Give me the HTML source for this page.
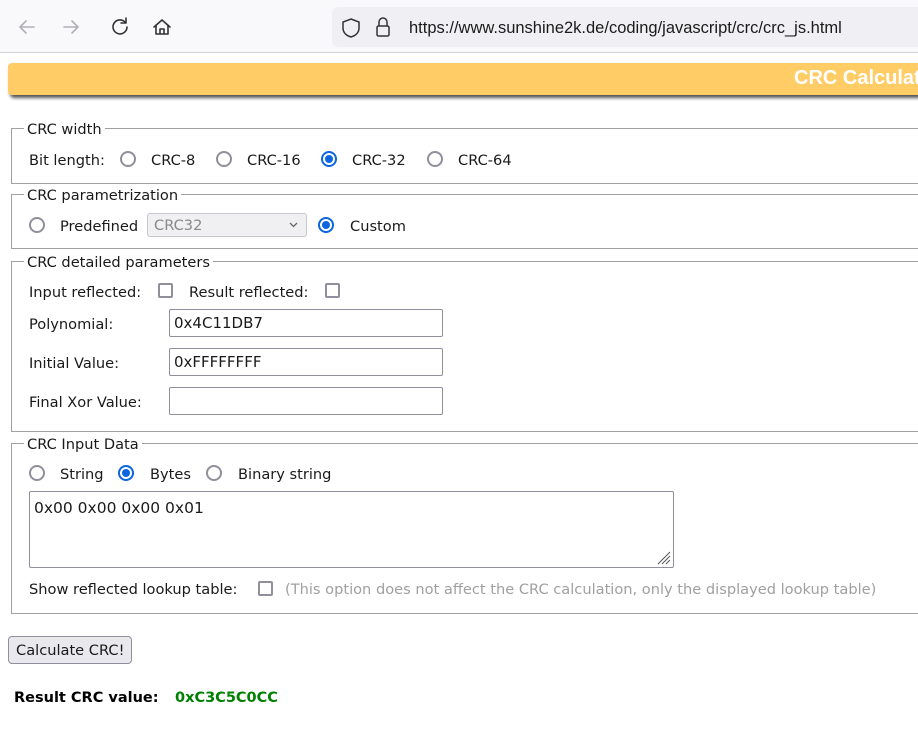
<!DOCTYPE html>
<html><head><style>
body{margin:0;width:918px;height:730px;overflow:hidden;background:#fff;font-family:"DejaVu Sans","Liberation Sans",sans-serif;font-size:14.6px;color:#1a1a1a;position:relative}
.a{position:absolute;white-space:nowrap}
.fs{position:absolute;left:11px;width:920px;border:1px solid #a0a0a0;border-right:none}
.lg{position:absolute;background:#fff;padding:0 3px;left:24px;line-height:16px}
.r{position:absolute;width:16px;height:16px;border:2px solid #8f8f9d;border-radius:50%;box-sizing:border-box}
.r.on{border:2px solid #0b66e0}
.r.on::after{content:"";position:absolute;left:2px;top:2px;width:8px;height:8px;border-radius:50%;background:#0b66e0}
.cb{position:absolute;width:15px;height:15px;border:2px solid #8f8f9d;border-radius:2px;box-sizing:border-box}
.in{position:absolute;height:28px;border:1px solid #8f8f9d;border-radius:2px;box-sizing:border-box;padding:3px 4px;line-height:20px;font-size:15px}
</style></head><body>
<div class="a" style="left:0;top:0;width:918px;height:52px;background:#f9f9fb;border-bottom:1px solid #d0d0d6"></div>
<svg class="a" style="left:0;top:0" width="200" height="52" fill="none" stroke-width="1.6" stroke-linecap="round" stroke-linejoin="round">
<path d="M34 27H20M26 21l-6 6 6 6" stroke="#b0b0b6"/>
<path d="M64 27h14M72 21l6 6-6 6" stroke="#b0b0b6"/>
<path d="M125 22a7 7 0 1 0 2 5M126 18v5h-5" stroke="#333"/>
<path d="M154 27l8-7 8 7M156 25v9h12v-9M160 34v-5h4v5" stroke="#333"/>
</svg>
<div class="a" style="left:332px;top:7px;width:600px;height:40px;background:#f0f0f4;border-radius:6px"></div>
<svg class="a" style="left:340px;top:14px" width="60" height="28" fill="none" stroke="#333" stroke-width="1.5">
<path d="M11 5l8 3v6c0 5-4 8-8 9-4-1-8-4-8-9V8z"/>
<rect x="37" y="12" width="12" height="10" rx="1.5"/><path d="M39 12V8a4 4 0 0 1 8 0v4"/>
</svg>
<div class="a" style="left:409px;top:19px;font-family:'Liberation Sans',sans-serif;font-size:16.5px;color:#1b1b1b">https://www.sunshine2k.de/coding/javascript/crc/crc_js.html</div>
<div class="a" style="left:8px;top:63px;width:920px;height:32px;background:#ffcc66;border-radius:4px 0 0 4px;box-shadow:2px 3px 3px #555"></div>
<div class="a" style="left:794px;top:67px;font-family:'Liberation Sans',sans-serif;font-weight:bold;font-size:20px;color:#fff">CRC Calculator</div>

<div class="fs" style="top:128px;height:54px"></div><div class="lg a" style="top:122px">CRC width</div>
<div class="a" style="left:29px;top:152px">Bit length:</div>
<div class="r" style="left:120px;top:151px"></div><div class="a" style="left:151px;top:152px">CRC-8</div>
<div class="r" style="left:216px;top:151px"></div><div class="a" style="left:247px;top:152px">CRC-16</div>
<div class="r on" style="left:321px;top:151px"></div><div class="a" style="left:352px;top:152px">CRC-32</div>
<div class="r" style="left:427px;top:151px"></div><div class="a" style="left:458px;top:152px">CRC-64</div>

<div class="fs" style="top:194px;height:53px"></div><div class="lg a" style="top:188px">CRC parametrization</div>
<div class="r" style="left:29px;top:217px"></div><div class="a" style="left:60px;top:218px">Predefined</div>
<div class="a" style="left:147px;top:213px;width:160px;height:24px;border:1px solid #c8c8cc;border-radius:3px;background:#f0f0f2;box-sizing:border-box;color:#888;padding:3px 6px">CRC32<svg style="position:absolute;right:8px;top:8px" width="9" height="6" fill="none" stroke="#666" stroke-width="1.3"><path d="M1 1l3.5 3.5L8 1"/></svg></div>
<div class="r on" style="left:318px;top:217px"></div><div class="a" style="left:350px;top:218px">Custom</div>

<div class="fs" style="top:261px;height:169px"></div><div class="lg a" style="top:255px">CRC detailed parameters</div>
<div class="a" style="left:29px;top:284px">Input reflected:</div><div class="cb" style="left:158px;top:283px"></div>
<div class="a" style="left:189px;top:284px">Result reflected:</div><div class="cb" style="left:325px;top:283px"></div>
<div class="a" style="left:29px;top:316px">Polynomial:</div><div class="in" style="left:169px;top:309px;width:274px">0x4C11DB7</div>
<div class="a" style="left:29px;top:355px">Initial Value:</div><div class="in" style="left:169px;top:348px;width:274px">0xFFFFFFFF</div>
<div class="a" style="left:29px;top:394px">Final Xor Value:</div><div class="in" style="left:169px;top:387px;width:274px"></div>

<div class="fs" style="top:443px;height:169px"></div><div class="lg a" style="top:437px">CRC Input Data</div>
<div class="r" style="left:29px;top:465px"></div><div class="a" style="left:60px;top:466px">String</div>
<div class="r on" style="left:118px;top:465px"></div><div class="a" style="left:150px;top:466px">Bytes</div>
<div class="r" style="left:206px;top:465px"></div><div class="a" style="left:238px;top:466px">Binary string</div>
<div class="in" style="left:29px;top:491px;width:645px;height:77px;font-size:15.5px;padding-top:6px">0x00 0x00 0x00 0x01</div>
<svg class="a" style="left:655px;top:549px" width="16" height="16" stroke="#555"><path d="M3 15L15 3M7 15l8-8M11 15l4-4"/></svg>
<div class="a" style="left:29px;top:581px">Show reflected lookup table:</div><div class="cb" style="left:258px;top:581px"></div>
<div class="a" style="left:285px;top:581px;color:#a0a0a0">(This option does not affect the CRC calculation, only the displayed lookup table)</div>

<div class="a" style="left:8px;top:636px;width:124px;height:28px;border:1px solid #8f8f9d;border-radius:4px;background:#e9e9ed;box-sizing:border-box;padding:5px 0 0 7px">Calculate CRC!</div>
<div class="a" style="left:14px;top:690px;font-weight:bold;font-size:14.5px;color:#000">Result CRC value:</div>
<div class="a" style="left:175px;top:690px;font-weight:bold;font-size:14.5px;color:#008000">0xC3C5C0CC</div>
</body></html>
